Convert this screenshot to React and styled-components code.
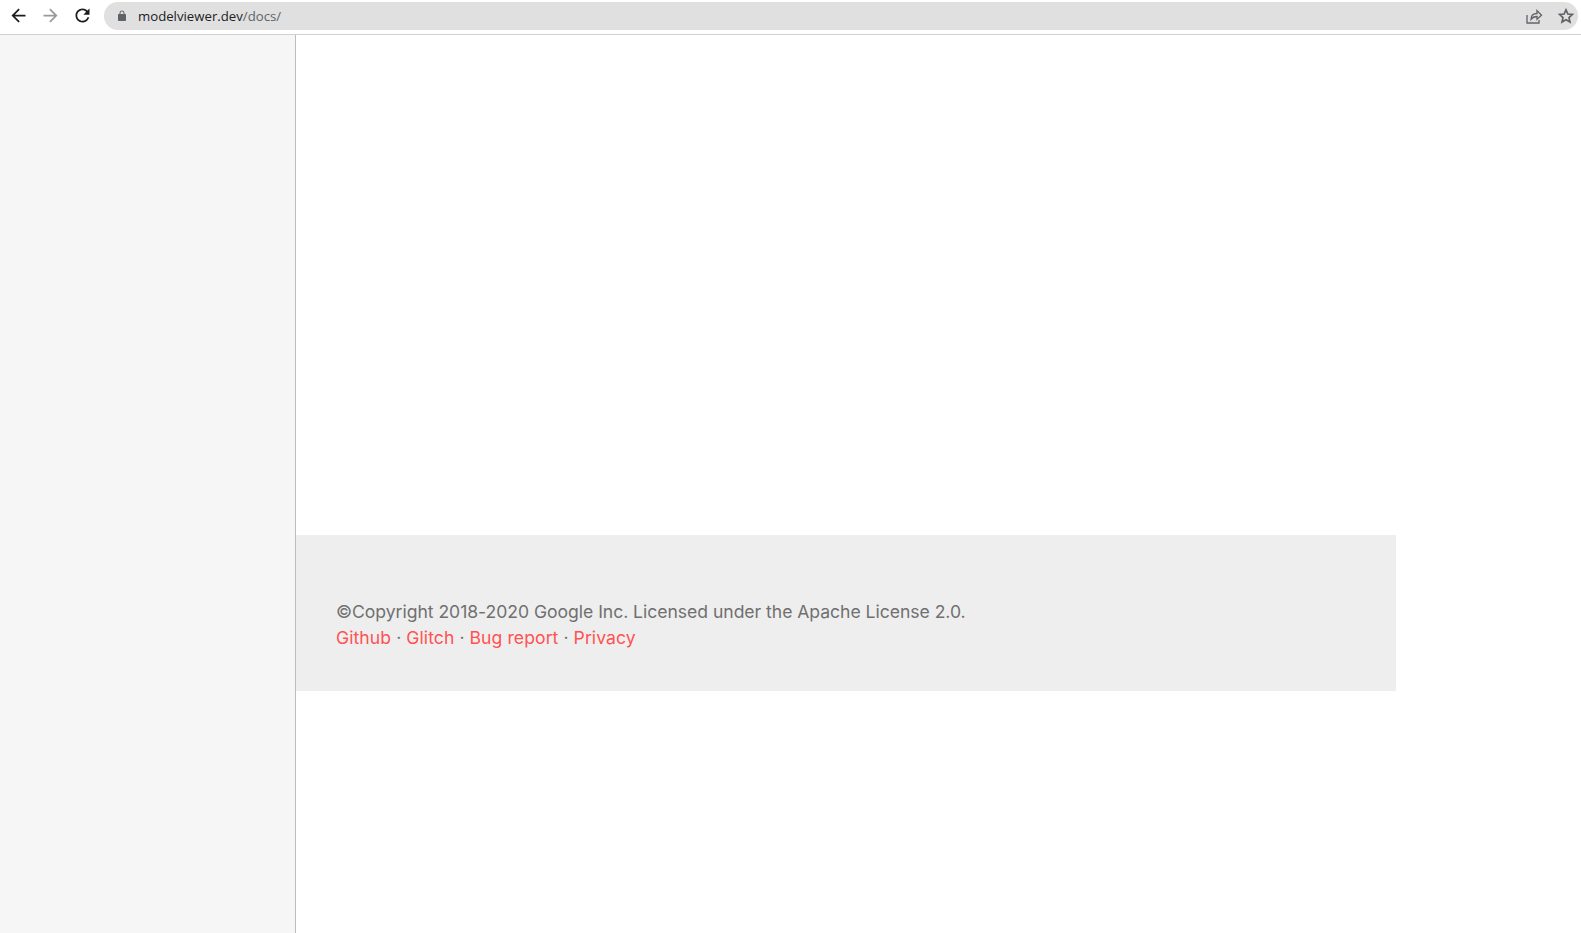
import React from 'react';
import styled, { createGlobalStyle } from 'styled-components';

const GlobalStyle = createGlobalStyle`
    html, body {
        margin: 0;
        padding: 0;
        background: #fff;
    }
    body {
        font-family: 'Inter', 'Open Sans', sans-serif;
    }
`

const Page = styled.div`
    display: flex;
    flex-direction: column;
    height: 933px;
    overflow: hidden;
`
const Toolbar = styled.header`
    display: flex;
    align-items: center;
    flex: 0 0 35px;
    box-sizing: border-box;
    padding: 0 3px 3px 2px;
    background: #fff;
    border-bottom: 1px solid #d0d0d0;
`
const NavButton = styled.button`
    display: flex;
    align-items: center;
    justify-content: center;
    width: 32px;
    height: 24px;
    padding: 0;
    border: 0;
    background: none;
    color: ${props => props.disabled ? '#9a9a9a' : '#1c1c1c'};
`
const Omnibox = styled.div`
    display: flex;
    align-items: center;
    flex: 1;
    height: 28px;
    margin-left: 6px;
    padding: 0 3px 0 12px;
    border-radius: 14px;
    background: #e0e0e0;
`
const LockIcon = styled.svg`
    width: 12px;
    height: 12px;
    margin-right: 10px;
    fill: #5f6368;
`
const Url = styled.span`
    flex: 1;
    font-family: 'Open Sans', sans-serif;
    font-size: 13.2px;
    color: #202124;
`
const UrlPath = styled.span`
    color: #5f6368;
`
const OmniIcon = styled.svg`
    width: 18px;
    height: 18px;
    margin-left: ${props => props.$gap || 0}px;
    fill: none;
    stroke: #5f6368;
    stroke-width: ${props => props.$weight || 1.3};
`
const Body = styled.div`
    display: flex;
    flex: 1;
    min-height: 0;
`
const Sidebar = styled.aside`
    flex: 0 0 295px;
    background: #f6f6f6;
    border-right: 1px solid #bdbdbd;
`
const Main = styled.main`
    flex: 1;
    padding-top: 500px;
`
const Footer = styled.footer`
    box-sizing: border-box;
    width: 1100px;
    height: 156px;
    padding: 64px 40px 0;
    background: #eeeeee;
    font-size: 17.6px;
    line-height: 26px;
    color: #707070;
`
const FooterLine = styled.div`
    white-space: nowrap;
    letter-spacing: ${props => props.$spacing}px;
`
const FooterLink = styled.a`
    color: #ff5252;
    text-decoration: none;
`

function ArrowIcon({flip}){
    return(
        <svg width="21" height="21" viewBox="0 0 24 24" fill="currentColor" style={flip ? {transform:"scaleX(-1)"} : undefined}>
            <path d="M20 11H7.83l5.59-5.59L12 4l-8 8 8 8 1.41-1.41L7.83 13H20v-2z"/>
        </svg>
    )
}

function App(){
    return(
        <Page>
            <GlobalStyle/>
            <Toolbar>
                <NavButton><ArrowIcon/></NavButton>
                <NavButton disabled><ArrowIcon flip/></NavButton>
                <NavButton>
                    <svg width="21" height="21" viewBox="0 0 24 24" fill="currentColor">
                        <path d="M17.65 6.35C16.2 4.9 14.21 4 12 4c-4.42 0-7.99 3.58-7.99 8s3.57 8 7.99 8c3.73 0 6.84-2.55 7.73-6h-2.08c-.82 2.33-3.04 4-5.65 4-3.31 0-6-2.69-6-6s2.69-6 6-6c1.66 0 3.14.69 4.22 1.78L13 11h7V4l-2.35 2.35z"/>
                    </svg>
                </NavButton>
                <Omnibox>
                    <LockIcon viewBox="0 0 24 24">
                        <path d="M18 8h-1V6c0-2.76-2.24-5-5-5S7 3.24 7 6v2H6c-1.1 0-2 .9-2 2v10c0 1.1.9 2 2 2h12c1.1 0 2-.9 2-2V10c0-1.1-.9-2-2-2zM9 8V6c0-1.66 1.34-3 3-3s3 1.34 3 3v2H9z"/>
                    </LockIcon>
                    <Url>modelviewer.dev<UrlPath>/docs/</UrlPath></Url>
                    <OmniIcon viewBox="0 0 18 18">
                        <path d="M2 8v8h12v-3"/>
                        <path d="M6 12.5c0-4 2.5-6 6-6V3.5l4.5 4.7-4.5 4V9.5c-2.5 0-4.500.8-6 3z"/>
                    </OmniIcon>
                    <OmniIcon viewBox="0 0 18 18" $gap={14} $weight={1.7}>
                        <path d="M9 2.800l1.900 4.200 4.500.5-3.400 3.100 1 4.500L9 12.800l-4 2.300 1-4.500-3.400-3.100 4.500-.5z"/>
                    </OmniIcon>
                </Omnibox>
            </Toolbar>
            <Body>
                <Sidebar/>
                <Main>
                    <Footer>
                        <FooterLine $spacing={-0.042}>©Copyright 2018-2020 Google Inc. Licensed under the Apache License 2.0.</FooterLine>
                        <FooterLine $spacing={0.065}>
                            <FooterLink>Github</FooterLink> · <FooterLink>Glitch</FooterLink> · <FooterLink>Bug report</FooterLink> · <FooterLink>Privacy</FooterLink>
                        </FooterLine>
                    </Footer>
                </Main>
            </Body>
        </Page>
    )
}

export default App;
